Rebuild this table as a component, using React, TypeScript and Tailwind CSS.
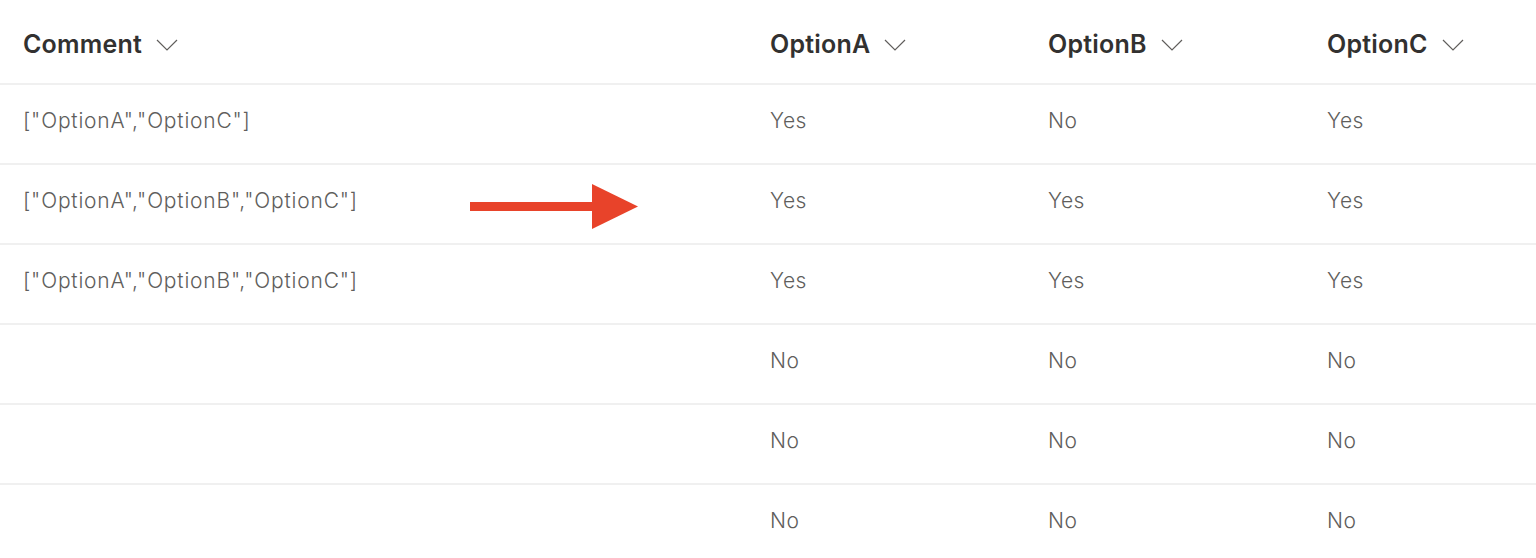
import React from "react";

const columns = ["Comment", "OptionA", "OptionB", "OptionC"];

const rows: string[][] = [
  ['["OptionA","OptionC"]', "Yes", "No", "Yes"],
  ['["OptionA","OptionB","OptionC"]', "Yes", "Yes", "Yes"],
  ['["OptionA","OptionB","OptionC"]', "Yes", "Yes", "Yes"],
  ["", "No", "No", "No"],
  ["", "No", "No", "No"],
  ["", "No", "No", "No"],
];

function Chevron() {
  return (
    <svg width="22" height="12" viewBox="0 0 22 12" className="ml-[14px] mt-[1px]">
      <polyline
        points="1,1 11,11 21,1"
        fill="none"
        stroke="#605e5c"
        strokeWidth="1.2"
      />
    </svg>
  );
}

function RedArrow() {
  return (
    <svg
      width="170"
      height="48"
      viewBox="0 0 170 48"
      className="absolute left-[470px] top-[183px]"
    >
      <rect x="0" y="19" width="124" height="9" fill="#e8432a" />
      <polygon points="122,1 168,23.5 122,46" fill="#e8432a" />
    </svg>
  );
}

const gridCols = "grid grid-cols-[747px_278px_279px_1fr]";

export default function App() {
  return (
    <main
      className="relative w-full h-[558px] overflow-hidden bg-white"
      style={{ fontFamily: "Inter, 'Noto Sans', sans-serif" }}
    >
      {/* Header */}
      <div className={`${gridCols} h-[85px] border-b-2 border-[#f0f0f0]`}>
        {columns.map((col) => (
          <div key={col} className="flex items-center pt-[6px] pl-[23px]">
            <span className="text-[25px] font-semibold text-[#323130] tracking-[0.2px]">
              {col}
            </span>
            <Chevron />
          </div>
        ))}
      </div>

      {/* Rows */}
      {rows.map((row, r) => (
        <div
          key={r}
          className={`${gridCols} h-[80px] border-b-2 border-[#f0f0f0]`}
        >
          {row.map((cell, i) => (
            <div
              key={i}
              className={`flex items-center pb-[6px] pl-[23px] text-[21px] font-light text-[#605e5c] ${
                i === 0 ? "tracking-[0.8px]" : "tracking-[0.5px]"
              }`}
            >
              {cell}
            </div>
          ))}
        </div>
      ))}

      <RedArrow />
    </main>
  );
}
